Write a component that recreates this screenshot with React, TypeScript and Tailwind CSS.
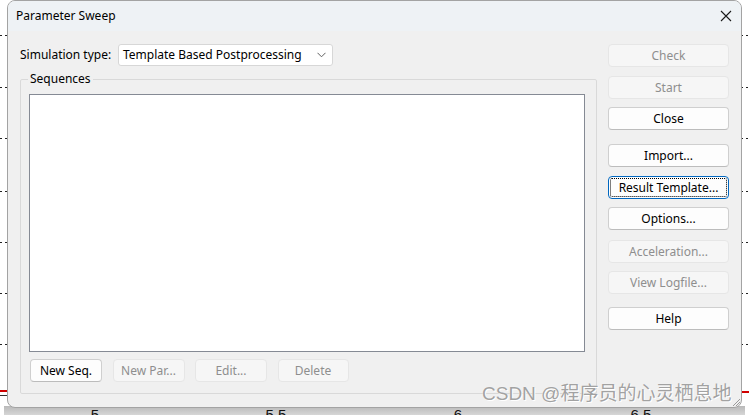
import React from "react";

const ChartBackdrop: React.FC = () => {
  const ticks = [35, 87, 138, 191, 242, 293, 344];
  return (
    <svg className="absolute inset-0" width={749} height={415}>
      {ticks.map((y) => (
        <g key={y}>
          <line x1={0} y1={y + 0.5} x2={8} y2={y + 0.5} stroke="#222" strokeDasharray="2 3" />
          <line x1={741} y1={y + 0.5} x2={749} y2={y + 0.5} stroke="#222" strokeDasharray="2 3" />
        </g>
      ))}
      <line x1={0} y1={391} x2={8} y2={391} stroke="#d00000" strokeWidth={2} />
      <line x1={741} y1={392} x2={749} y2={392} stroke="#d00000" strokeWidth={2} />
      <line x1={0} y1={395.5} x2={8} y2={395.5} stroke="#333" />
      <defs>
        <linearGradient id="shade" x1="0" y1="0" x2="0" y2="1">
          <stop offset="0" stopColor="#b9b9b9" />
          <stop offset="1" stopColor="#d6d6d6" />
        </linearGradient>
      </defs>
      <rect x={4} y={406} width={741} height={9} fill="url(#shade)" />
      {[
        { x: 95, t: "5" },
        { x: 276, t: "5.5" },
        { x: 458, t: "6" },
        { x: 641, t: "6.5" },
      ].map((l) => (
        <text key={l.t} x={l.x} y={420} fontSize={15} fontFamily="Liberation Sans, sans-serif" textAnchor="middle" fill="#111">
          {l.t}
        </text>
      ))}
    </svg>
  );
};

type BtnProps = { label: string; disabled?: boolean; focused?: boolean; className?: string };

const Btn: React.FC<BtnProps> = ({ label, disabled, focused, className = "" }) => {
  const tone = disabled
    ? "bg-[#f6f6f6] border-[#e6e6e6] text-[#8e8e8e]"
    : focused
    ? "bg-[#fdfdfd] border-[#0067c0] text-black"
    : "bg-[#fdfdfd] border-[#cfcfcf] border-b-[#bcbcbc] text-black";
  return (
    <div className={`relative h-[23px] border rounded-[4px] flex items-center justify-center text-[12px] leading-none ${tone} ${className}`}>
      {focused && <span className="absolute inset-[1px] border border-dotted border-black rounded-[2px]" />}
      <span className="relative">{label}</span>
    </div>
  );
};

const App: React.FC = () => {
  return (
    <div className="relative w-[749px] h-[415px] bg-white overflow-hidden font-['Noto_Sans',sans-serif]">
      <ChartBackdrop />
      <div className="relative ml-[7px] w-[735px] h-[408px] rounded-[8px] border border-[#a3a3a3] bg-[#f0f0f0] flex flex-col overflow-hidden">
        <div className="h-[30px] shrink-0 bg-[#eef2f5] flex items-center justify-between pl-[8px] pr-[8px]">
          <span className="text-[12px] text-black">Parameter Sweep</span>
          <svg width="12" height="12" viewBox="0 0 12 12" className="mr-[1px]">
            <path d="M1 1 L11 11 M11 1 L1 11" stroke="#1a1a1a" strokeWidth="1.1" />
          </svg>
        </div>
        <div className="flex flex-1 pl-[12px] pr-[12px] pt-[13px]">
          <div className="w-[577px] flex flex-col">
            <div className="flex items-center h-[22px]">
              <span className="text-[12px] text-black w-[98px]">Simulation type:</span>
              <div className="w-[215px] h-[22px] bg-white border border-[#d7d7d7] rounded-[3px] flex items-center justify-between pl-[4px] pr-[6px]">
                <span className="text-[12px] text-black">Template Based Postprocessing</span>
                <svg width="9" height="6" viewBox="0 0 9 6">
                  <path d="M0.5 0.8 L4.5 4.8 L8.5 0.8" fill="none" stroke="#606060" strokeWidth="1" />
                </svg>
              </div>
            </div>
            <div className="relative mt-[13px] w-[577px] h-[315px] border border-[#d9d9d9] rounded-[2px] pl-[8px] pr-[11px] pt-[14px]">
              <span className="absolute left-[7px] -top-[9px] px-[2px] bg-[#f0f0f0] text-[12px] text-black leading-[16px]">Sequences</span>
              <div className="w-[556px] h-[258px] bg-white border border-[#858a94]" />
              <div className="flex gap-[10.5px] mt-[7px] ml-[1px]">
                <Btn label="New Seq." className="w-[72px]" />
                <Btn label="New Par..." disabled className="w-[72px]" />
                <Btn label="Edit..." disabled className="w-[72px]" />
                <Btn label="Delete" disabled className="w-[71px]" />
              </div>
            </div>
          </div>
          <div className="ml-[11px] w-[121px] flex flex-col">
            <Btn label="Check" disabled />
            <Btn label="Start" disabled className="mt-[9px]" />
            <Btn label="Close" className="mt-[8px]" />
            <Btn label="Import..." className="mt-[14px]" />
            <Btn label="Result Template..." focused className="mt-[9px]" />
            <Btn label="Options..." className="mt-[8px]" />
            <Btn label="Acceleration..." disabled className="mt-[10px]" />
            <Btn label="View Logfile..." disabled className="mt-[8px]" />
            <Btn label="Help" className="mt-[13px]" />
          </div>
        </div>
      </div>
      <div className="absolute left-[482px] top-[383px] text-[19px] leading-[22px] text-[#a2a2a2] font-['Liberation_Sans','Noto_Sans_CJK_SC',sans-serif] [text-shadow:0_0_1px_#fff,1px_1px_0_#fff]">
        CSDN @程序员的心灵栖息地
      </div>
      <svg className="absolute left-[732px] top-[398px]" width="9" height="9" viewBox="0 0 9 9">
        <path d="M1 8 L8 1 M4 8 L8 4" stroke="#9a9a9a" strokeWidth="1" />
      </svg>
    </div>
  );
};

export default App;
